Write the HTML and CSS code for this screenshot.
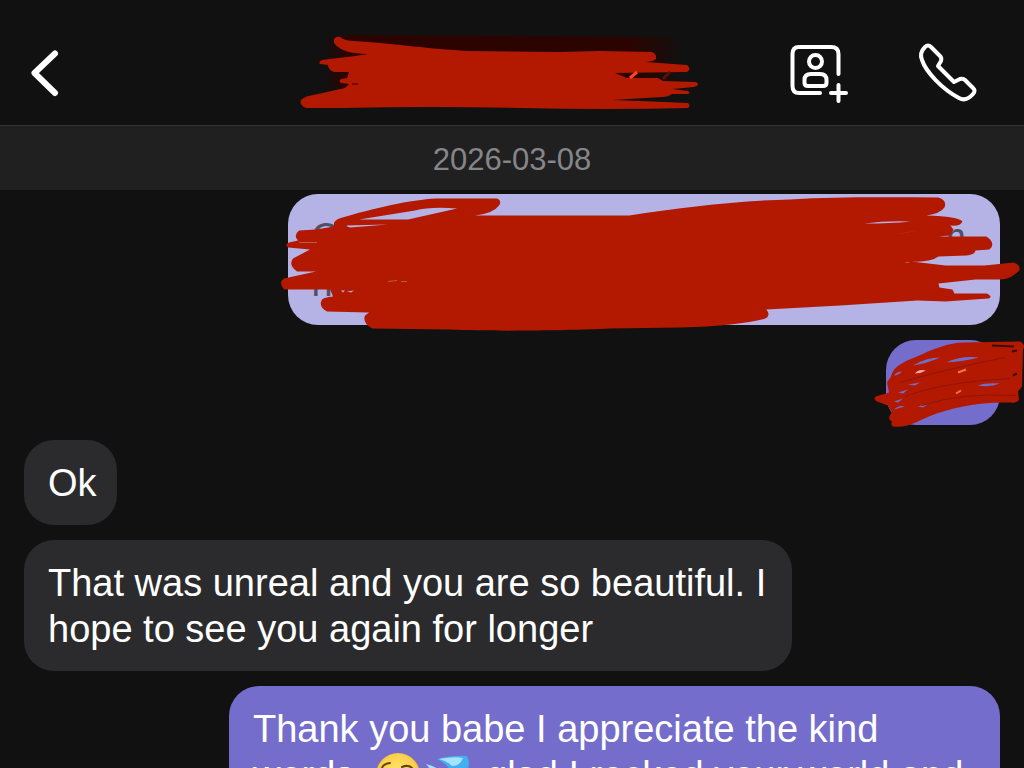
FILE: index.html
```html
<!DOCTYPE html>
<html lang="en">
<head>
    <meta charset="UTF-8">
    <meta name="viewport" content="width=device-width, initial-scale=1.0">
    <title>Messages</title>
    <link rel="stylesheet" href="styles.css">
</head>
<body>
    <header class="chat-header">
        <button type="button" class="icon-btn back-btn" aria-label="Back">
            <svg width="32" height="48" viewBox="29 49 32 48">
                <path d="M55 53.500 L34.500 73 L55 93" fill="none" stroke="#fff" stroke-width="6" stroke-linecap="round" stroke-linejoin="round"/>
            </svg>
        </button>

        <!-- Contact name, crossed out -->
        <h1 class="contact-name" aria-label="Contact">
            <svg width="420" height="74" viewBox="302 36 420 74">
                <defs>
                    <linearGradient id="smudge" x1="0" x2="1">
                        <stop offset="0" stop-color="#2b0400" stop-opacity="0"/>
                        <stop offset="0.06" stop-color="#2b0400"/>
                        <stop offset="0.85" stop-color="#2b0400"/>
                        <stop offset="1" stop-color="#2b0400" stop-opacity="0"/>
                    </linearGradient>
                </defs>
                <path d="M324 38 L350 35 L678 37 L684 90 L324 88 Z" fill="url(#smudge)"/>
                <path class="marker" d="M334 39 Q338 34 343 39 Q348 41 353 41 C400 44 430 49 467 51 L560 52 L600 51 L652 52 Q657 54 656 59 Q654 61 646 62 L687 65 Q692 69 687 72 L615 73 L627 78 L658 78 L663 81 L696 82 Q701 85 694 87 L672 89 L688 91 Q691 93 688 94 L672 94 Q668 97 662 97 L613 100 L640 101 L688 103 Q691 106 688 108 Q610 110 520 108 Q430 106 342 108 L306 108 Q299 105 301 100 Q304 96 318 94 L345 88 L349 84 L341 83 Q338 81 341 79 L347 78 L349 72 L334 72 Q328 70 328 65 L320 64 Q318 62 322 60 L355 56 L368 54 Q342 54 334 43 Z"/>
                <path d="M630 78 L637 72" stroke="#ff4325" stroke-width="3"/>
                <path d="M663 79 L670 72" stroke="#5a1008" stroke-width="3"/>
                <path d="M352 84 L358 84" stroke="#2b0400" stroke-width="1"/>
            </svg>
        </h1>

        <div class="header-actions">
            <button type="button" class="icon-btn" aria-label="Add contact">
                <svg width="60" height="60" viewBox="789 43 60 60" fill="none" stroke="#fff" stroke-width="4" stroke-linecap="round" stroke-linejoin="round">
                    <path d="M820 93 H799 Q792.500 93 792.500 86 V54 Q792.500 47 799 47 H831 Q838.500 47 838.500 54 V74"/>
                    <circle cx="815.500" cy="61.500" r="6.500"/>
                    <path d="M811 74 H820 Q826.500 74 826.500 80 V83 Q826.500 86 823 86 H808 Q804.500 86 804.500 83 V80 Q804.500 74 811 74 Z"/>
                    <path d="M838.500 85 V101 M831 93 H846"/>
                </svg>
            </button>
            <button type="button" class="icon-btn" aria-label="Call">
                <svg width="60" height="60" viewBox="918 43 60 60" fill="none" stroke="#fff" stroke-width="4" stroke-linecap="round" stroke-linejoin="round">
                    <path d="M925 47 Q928 44 931 47 L940 56 Q942 58 941 61 L938 66 L954 82 L960 79 Q963 78 965 80 L973 88 Q976 91 973 94 Q966 102 959 98 C942 89 926 72 922 60 Q919 53 925 47 Z"/>
                </svg>
            </button>
        </div>
    </header>

    <div class="date-bar"><time datetime="2026-03-08">2026-03-08</time></div>

    <main class="messages">
        <div class="message sent faded">
            <p class="covered"><span>Ok</span><span>m</span></p>
            <p class="covered">now</p>
            <svg class="scribble" viewBox="288 194 712 130" aria-hidden="true">
                <path class="marker" fill-rule="evenodd" d="M334 222 Q336 218 346 216 C380 206 418 198 440 198 L497 198 Q502 200 499 205 Q493 213 475 215 L629 215 C680 207 740 200 790 199 C840 196 890 197 938 197 Q947 200 944 207 Q940 213 926 215 Q958 216 962 221 Q960 226 950 225 L953 229 L950 235 L936 236 L986 236 Q996 243 989 249 L975 250 Q975 254 966 255 L938 256 Q930 262 911 261 L945 265 L984 265 L1013 262 Q1020 264 1019 270 L1014 274 Q1008 279 999 279 L975 279 L938 283 L939 287 L952 289 L954 293 L986 293 Q993 296 988 298 L945 301 L917 300 L840 305 L766 309 Q771 315 765 318 Q740 325 680 327 L610 328 C570 330 490 331 450 329 L372 328 Q362 322 365 315 L369 312 L327 311 Q318 306 322 299 Q324 297 333 296 L330 289 L284 289 Q278 282 284 278 L316 271 L297 271 Q288 265 293 258 L310 249 L288 247 Q284 244 289 242 L298 240 Q293 235 299 230 L316 229 L334 226 Z M359 219 L408 219 L457 208 Q430 206 415 210 Z M344 225 L388 224 L350 227 Z"/>
                <path d="M864 223 Q887 220 910 221 Q890 223 864 223 Z M895 234 L918 230 L906 232 Z M341 290 L345 290 L343 292 Z M347 291 L354 290 L351 292 Z" fill="#b5b2e6"/>
                <path d="M388 281 L397 280 M401 281 L407 281 M299 242 L317 242 M905 262 L909 262" stroke="#b65b50" stroke-width="1"/>
            </svg>
        </div>

        <div class="message sent short">
            <p>&nbsp;</p>
            <svg class="scribble" viewBox="886 340 114 84" aria-hidden="true">
                <path class="marker" d="M891 376 C893 366 904 361 917 356 C932 349 949 342 964 342 L1020 341 Q1026 344 1023 349 L1022 386 L1018 391 L1019 399 Q1017 403 1011 402 C980 401 950 407 929 416 C916 421 908 428 893 426 Q890 424 892 421 Q886 418 892 412 L888 405 L877 401 Q871 397 879 395 L889 392 L887 382 Z"/>
                <g fill="#736dca">
                    <path d="M913 365 Q926 357 940 357 Q927 363 913 365 Z"/>
                    <path d="M946 362 Q962 355 979 357 Q964 361 946 362 Z"/>
                    <path d="M978 385 Q986 382 1000 383 Q990 387 978 385 Z"/>
                    <path d="M894 375 Q897 371 902 371 Q898 375 894 375 Z"/>
                    <path d="M894 409 Q899 404 905 406 Z"/>
                    <path d="M898 392 L908 389 L903 393 Z"/>
                    <path d="M908 384 L920 382 L915 385 Z"/>
                    <path d="M918 406 L929 403 L923 407 Z"/>
                    <path d="M894 401 L903 398 L898 402 Z"/>
                </g>
                <path d="M915 373 Q918 368 926 370 Q921 373 915 373 Z" fill="#f2a9a5"/>
                <path d="M958 372 L966 369 M956 393 L961 390" stroke="#eb7750" stroke-width="2"/>
                <path d="M992 345 L1014 346 M1012 351 L1017 350 M1013 375 L1017 373" stroke="#391009" stroke-width="2"/>
                <path d="M900 382 Q940 370 1005 357 M905 396 Q940 382 1010 378 M922 405 Q960 392 1016 395" stroke="#8d1609" stroke-width="1" fill="none"/>
            </svg>
        </div>

        <div class="message received">
            <p>Ok</p>
        </div>

        <div class="message received">
            <p>That was unreal and you are so beautiful. I hope to see you again for longer</p>
        </div>

        <div class="message sent">
            <p>Thank you babe I appreciate the kind words.
                <svg class="emoji" viewBox="0 0 46 46" role="img" aria-label="smirking face">
                    <defs>
                        <radialGradient id="face" cx="0.5" cy="0.45" r="0.55">
                            <stop offset="0" stop-color="#ffe873"/>
                            <stop offset="0.75" stop-color="#fdd04b"/>
                            <stop offset="1" stop-color="#eda62e"/>
                        </radialGradient>
                    </defs>
                    <circle cx="23" cy="23" r="22" fill="url(#face)"/>
                    <path d="M7 16 Q8 12 15 11 M27 15 Q34 12 38 17 M9 21 Q13 17 18 21 M27 21 Q32 17 37 21" fill="none" stroke="#63411a" stroke-width="2" stroke-linecap="round"/>
                    <path d="M15 34 Q26 36 33 29" fill="none" stroke="#63411a" stroke-width="2" stroke-linecap="round"/>
                </svg><svg class="emoji" viewBox="0 0 46 46" role="img" aria-label="sweat droplets">
                    <path d="M12 7 Q28 3 42 4 Q47 14 39 22 Q31 28 26 19 Q21 11 12 7 Z" fill="#43aef0"/>
                    <path d="M14 7 Q30 4 38 6 Q35 14 27 14 Q22 9 14 7 Z" fill="#a5e3ff"/>
                    <path d="M1 12 Q13 15 19 22 Q23 31 17 34 Q10 35 8 27 Q7 18 1 12 Z" fill="#a5e3ff"/>
                    <path d="M16 36 Q27 31 34 34 Q37 40 31 43 Q25 43 16 36 Z" fill="#43aef0"/>
                </svg> glad I rocked your world and</p>
        </div>
    </main>
</body>
</html>
```

FILE: styles.css
```css
/* Global Styles */
* {
    box-sizing: border-box;
}

body {
    margin: 0;
    height: 100vh;
    display: flex;
    flex-direction: column;
    overflow: hidden;
    background-color: #111111;
    color: #ffffff;
    font-family: "Liberation Sans", Arial, sans-serif;
}

/* Header */
.chat-header {
    display: grid;
    grid-template-columns: 1fr auto 1fr;
    align-items: center;
    padding: 36px 46px 15px 29px;
    border-bottom: 1px solid #343434;
}

.icon-btn {
    padding: 0;
    border: none;
    background: none;
    cursor: pointer;
}

.icon-btn svg,
.contact-name svg {
    display: block;
    overflow: visible;
}

.back-btn {
    justify-self: start;
}

.contact-name {
    margin: 0 -8px 0 8px;
}

.header-actions {
    display: flex;
    gap: 69px;
    justify-self: end;
}

/* Date */
.date-bar {
    padding: 16px 0 12px;
    background-color: #202020;
    color: #86868a;
    font-size: 31px;
    line-height: 36px;
    text-align: center;
}

/* Messages */
.messages {
    display: flex;
    flex: 1;
    flex-direction: column;
    gap: 15px;
    padding: 4px 24px;
    min-height: 0;
    overflow: hidden;
}

.message {
    position: relative;
    flex-shrink: 0;
    max-width: 79%;
    padding: 20px 24px 19px;
    border-radius: 30px;
    font-size: 38px;
    line-height: 46px;
}

.message p {
    margin: 0;
}

.received {
    align-self: flex-start;
    padding-right: 20px;
    background-color: #2b2b2d;
}

.received p {
    max-width: 724px;
}

.sent {
    align-self: flex-end;
    background-color: #746dcc;
}

.faded {
    width: 73%;
    background-color: #b5b2e6;
    color: #505064;
}

.short {
    width: 114px;
}

.covered {
    display: flex;
    justify-content: space-between;
    padding-right: 10px;
}

/* Marker strokes lie over the bubbles and run past their edges */
.scribble {
    position: absolute;
    inset: 0;
    width: 100%;
    height: 100%;
    overflow: visible;
}

.marker {
    fill: #b31900;
}

.emoji {
    width: 46px;
    height: 46px;
    margin: -6px 4px 0 0;
    vertical-align: middle;
}
```
